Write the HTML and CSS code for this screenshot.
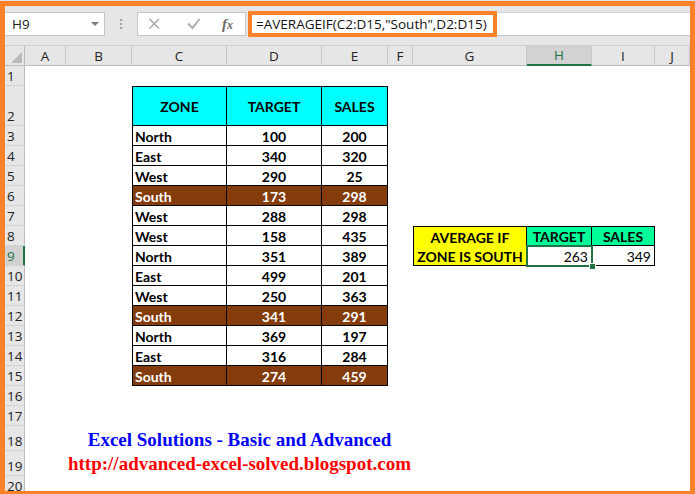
FILE: index.html
```html
<!DOCTYPE html>
<html>
<head>
<meta charset="utf-8">
<link rel="stylesheet" href="styles.css">
</head>
<body>
<div class="frame">
  <div class="toolbar">
    <div class="namebox"><span>H9</span><span class="caret"></span></div>
    <div class="dots">
      <svg width="4" height="24" viewBox="0 0 4 24"><rect x="1" y="7" width="2" height="2" fill="#a0a0a0"/><rect x="1" y="11" width="2" height="2" fill="#a0a0a0"/><rect x="1" y="15" width="2" height="2" fill="#a0a0a0"/></svg>
    </div>
    <div class="fxbox">
      <svg class="fxicons" width="70" height="22" viewBox="0 0 70 22">
        <path d="M11.5 6 L21 15.5 M21 6 L11.5 15.5" stroke="#a3a3a3" stroke-width="1.4" fill="none"/>
        <path d="M50 10.5 L54.5 15 L61.5 6" stroke="#adadad" stroke-width="2" fill="none"/>
      </svg>
      <span class="fx"><i>f</i><span class="x">x</span></span>
    </div>
    <div class="formula">
      <div class="hl">=AVERAGEIF(C2:D15,"South",D2:D15)</div>
    </div>
  </div>
  <table class="sheet">
    <colgroup>
      <col style="width:20px"><col style="width:41px"><col style="width:66px"><col style="width:95px"><col style="width:95px"><col style="width:66px"><col style="width:25px"><col style="width:114px"><col style="width:65px"><col style="width:63px"><col style="width:35px">
    </colgroup>
    <tr class="h20">
      <th class="corner"><svg width="19" height="19" viewBox="0 0 19 19"><path d="M6 17 L17 17 L17 6 Z" fill="#b8b8b8"/></svg></th>
      <th class="ch">A</th><th class="ch">B</th><th class="ch">C</th><th class="ch">D</th><th class="ch">E</th><th class="ch">F</th><th class="ch">G</th><th class="ch sel">H</th><th class="ch">I</th><th class="ch">J</th>
    </tr>
    <tr class="h20"><th class="rh">1</th><td></td><td></td><td></td><td></td><td></td><td></td><td></td><td></td><td></td><td></td></tr>
    <tr class="h40"><th class="rh">2</th><td></td><td></td>
      <td class="b bl bt cyan c mid">ZONE</td><td class="b bt cyan c mid">TARGET</td><td class="b bt cyan c mid">SALES</td>
      <td></td><td></td><td></td><td></td><td></td></tr>
    <tr class="h20"><th class="rh">3</th><td></td><td></td><td class="b bl l">North</td><td class="b c">100</td><td class="b c">200</td><td></td><td></td><td></td><td></td><td></td></tr>
    <tr class="h20"><th class="rh">4</th><td></td><td></td><td class="b bl l">East</td><td class="b c">340</td><td class="b c">320</td><td></td><td></td><td></td><td></td><td></td></tr>
    <tr class="h20"><th class="rh">5</th><td></td><td></td><td class="b bl l">West</td><td class="b c">290</td><td class="b c">25</td><td></td><td></td><td></td><td></td><td></td></tr>
    <tr class="h20 south"><th class="rh">6</th><td></td><td></td><td class="b bl l">South</td><td class="b c">173</td><td class="b c">298</td><td></td><td></td><td></td><td></td><td></td></tr>
    <tr class="h20"><th class="rh">7</th><td></td><td></td><td class="b bl l">West</td><td class="b c">288</td><td class="b c">298</td><td></td><td></td><td></td><td></td><td></td></tr>
    <tr class="h20"><th class="rh">8</th><td></td><td></td><td class="b bl l">West</td><td class="b c">158</td><td class="b c">435</td><td></td>
      <td class="yellow bl bt br c">AVERAGE IF</td><td class="green bt b c">TARGET</td><td class="green bt b c">SALES</td><td></td></tr>
    <tr class="h20"><th class="rh sel">9</th><td></td><td></td><td class="b bl l">North</td><td class="b c">351</td><td class="b c">389</td><td></td>
      <td class="yellow bl br bb c">ZONE IS SOUTH</td><td class="b r selcell">263<span class="selbox"></span><span class="handle"></span></td><td class="b r">349</td><td></td></tr>
    <tr class="h20"><th class="rh">10</th><td></td><td></td><td class="b bl l">East</td><td class="b c">499</td><td class="b c">201</td><td></td><td></td><td></td><td></td><td></td></tr>
    <tr class="h20"><th class="rh">11</th><td></td><td></td><td class="b bl l">West</td><td class="b c">250</td><td class="b c">363</td><td></td><td></td><td></td><td></td><td></td></tr>
    <tr class="h20 south"><th class="rh">12</th><td></td><td></td><td class="b bl l">South</td><td class="b c">341</td><td class="b c">291</td><td></td><td></td><td></td><td></td><td></td></tr>
    <tr class="h20"><th class="rh">13</th><td></td><td></td><td class="b bl l">North</td><td class="b c">369</td><td class="b c">197</td><td></td><td></td><td></td><td></td><td></td></tr>
    <tr class="h20"><th class="rh">14</th><td></td><td></td><td class="b bl l">East</td><td class="b c">316</td><td class="b c">284</td><td></td><td></td><td></td><td></td><td></td></tr>
    <tr class="h20 south"><th class="rh">15</th><td></td><td></td><td class="b bl l">South</td><td class="b c">274</td><td class="b c">459</td><td></td><td></td><td></td><td></td><td></td></tr>
    <tr class="h20"><th class="rh">16</th><td></td><td></td><td></td><td></td><td></td><td></td><td></td><td></td><td></td><td></td></tr>
    <tr class="h20"><th class="rh">17</th><td></td><td></td><td></td><td></td><td></td><td></td><td></td><td></td><td></td><td></td></tr>
    <tr class="h25"><th class="rh">18</th><td></td><td colspan="5" class="title">Excel Solutions - Basic and Advanced</td><td></td><td></td><td></td><td></td></tr>
    <tr class="h25"><th class="rh">19</th><td></td><td colspan="5" class="url">http://advanced-excel-solved.blogspot.com</td><td></td><td></td><td></td><td></td></tr>
    <tr class="h20"><th class="rh">20</th><td></td><td></td><td></td><td></td><td></td><td></td><td></td><td></td><td></td><td></td></tr>
  </table>
</div>
</body>
</html>
```

FILE: styles.css
```css
* { box-sizing: border-box; }
html, body { margin: 0; padding: 0; }
body {
  background: #e2e2e2;
  width: 695px;
  height: 494px;
  overflow: hidden;
}
.frame {
  margin-top: 1px;
  height: 493px;
  border-style: solid;
  border-color: #fd8128;
  border-width: 5px 5px 3px 5px;
  background: #fff;
  overflow: hidden;
}
.toolbar {
  height: 40px;
  background: #e6e6e6;
  border-bottom: 1px solid #cdcdcd;
  display: flex;
  align-items: flex-start;
  padding-top: 6px;
}
.namebox {
  width: 100px;
  height: 24px;
  background: #fff;
  border: 1px solid #c6c6c6;
  border-left: none;
  display: flex;
  align-items: center;
  justify-content: space-between;
  padding: 0 5px 0 7px;
  font: 13.5px "Open Sans", sans-serif;
  color: #222;
}
.caret {
  width: 0;
  height: 0;
  border-left: 4px solid transparent;
  border-right: 4px solid transparent;
  border-top: 4px solid #7a7a7a;
}
.dots {
  width: 32px;
  height: 24px;
  display: flex;
  justify-content: center;
}
.fxbox {
  width: 109px;
  height: 24px;
  background: #fff;
  border: 1px solid #c6c6c6;
  display: flex;
  align-items: center;
}
.fxicons { display: block; }
.fx {
  margin-left: 14px;
  font: 15px "Liberation Serif", serif;
  color: #6a6a6a;
  font-weight: bold;
}
.fx i { font-style: italic; }
.fx .x { font-size: 12px; font-style: italic; }
.formula {
  flex: 1;
  height: 24px;
  background: #fff;
  border-top: 1px solid #d4d4d4;
  border-bottom: 1px solid #c6c6c6;
  margin-left: 2px;
  display: flex;
}
.hl {
  height: 26px;
  margin-top: -2px;
  width: 249px;
  border: 4px solid #fd8128;
  background: #fff;
  font: 13.5px "Open Sans", sans-serif;
  color: #111;
  padding-left: 4px;
  line-height: 18px;
  white-space: nowrap;
  overflow: hidden;
}

.sheet {
  border-collapse: separate;
  border-spacing: 0;
  table-layout: fixed;
  width: 685px;
  font: bold 14px Lato, sans-serif;
  color: #000;
}
.sheet td, .sheet th {
  padding: 0;
  white-space: nowrap;
  overflow: hidden;
  vertical-align: bottom;
}
.h20 { height: 20px; }
.h25 { height: 25px; }
.h40 { height: 40px; }

.corner {
  background: #e6e6e6;
  border-right: 1px solid #bdbdbd;
  border-bottom: 1px solid #bdbdbd;
}
.corner svg { display: block; }
.sheet th.ch {
  background: #e6e6e6;
  border-right: 1px solid #c9c9c9;
  border-bottom: 1px solid #bdbdbd;
  font: 13.5px "Open Sans", sans-serif;
  color: #222;
  text-align: center;
  vertical-align: middle;
}
.sheet th.ch.sel {
  background: #d2d2d2;
  color: #217346;
  border-bottom: 2px solid #217346;
}
.sheet th.rh {
  background: #e6e6e6;
  border-right: 1px solid #bdbdbd;
  border-bottom: 1px solid #d2d2d2;
  font: 13.5px "Open Sans", sans-serif;
  color: #222;
  text-align: left;
  padding-left: 2px;
  line-height: 18px;
}
.sheet th.rh.sel {
  background: #d2d2d2;
  color: #217346;
  border-right: 2px solid #217346;
}

.b { border-right: 1px solid #000; border-bottom: 1px solid #000; }
.bl { border-left: 1px solid #000; }
.bt { border-top: 1px solid #000; }
.br { border-right: 1px solid #000; }
.bb { border-bottom: 1px solid #000; }
.cyan { background: #00ffff; }
.south td.b { background: #843c0c; color: #fff; }
.yellow { background: #ffff00; }
.green { background: #00ff99; }
.l { text-align: left; padding-left: 2px !important; }
.c { text-align: center; }
.r { text-align: right; padding-right: 3px !important; font-weight: normal; }
.sheet td.mid { vertical-align: middle; }

.sheet td.selcell { position: relative; overflow: visible; }
.selbox {
  position: absolute;
  left: -1px;
  top: -1px;
  right: -2px;
  bottom: -2px;
  border: 2px solid #217346;
}
.handle {
  position: absolute;
  right: -5px;
  bottom: -5px;
  width: 7px;
  height: 7px;
  background: #217346;
  border: 1px solid #fff;
}

.title, .url {
  text-align: center;
  font: bold 19px "Liberation Serif", serif;
}
.title { color: #0000ff; }
.sheet td.url { color: #ff0000; vertical-align: middle; }
```
